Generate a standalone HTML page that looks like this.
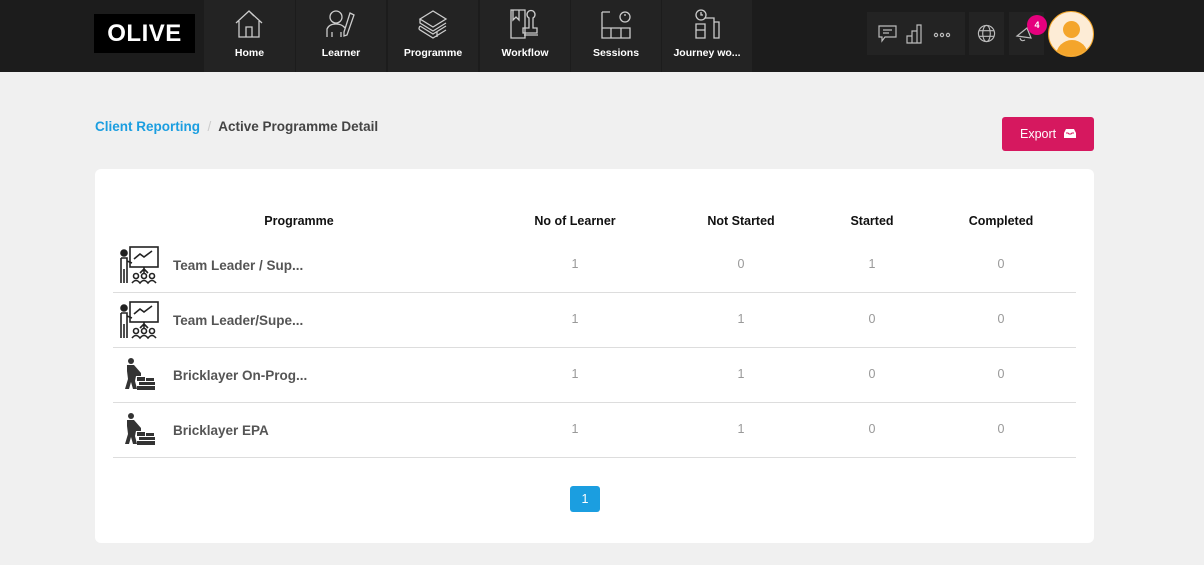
<!DOCTYPE html>
<html><head><meta charset="utf-8"><style>
*{margin:0;padding:0;box-sizing:border-box}
body{width:1204px;height:565px;background:#f0f0f0;font-family:"Liberation Sans",sans-serif;position:relative;overflow:hidden}
.top{position:absolute;left:0;top:0;width:1204px;height:72px;background:#1c1c1c}
.logo{position:absolute;left:94px;top:14px;width:101px;height:39px;background:#000;color:#fff;font-weight:bold;font-size:24px;text-align:center;line-height:39px;letter-spacing:0.5px}
.nav{position:absolute;top:0;height:72px;width:90px;background:#232323}
.nav span{position:absolute;left:0;right:0;top:47px;text-align:center;color:#fff;font-size:10.5px;font-weight:bold}
.nav svg{position:absolute;left:29px;top:8px}
.box{position:absolute;top:12px;height:43px;background:#232323}
.a{position:absolute;color:#333}
.card{position:absolute;left:95px;top:169px;width:999px;height:374px;background:#fff;border-radius:6px}
.th{position:absolute;top:214px;font-size:12.5px;font-weight:bold;color:#111;transform:translateX(-50%);white-space:nowrap}
.v{position:absolute;font-size:12.5px;color:#999;transform:translateX(-50%)}
.name{position:absolute;left:173px;font-size:13.5px;color:#555;font-weight:bold}
.ln{position:absolute;left:113px;width:963px;height:1px;background:#ddd}
</style></head><body>
<div class="top">
<div class="logo">OLIVE</div>
<div class="nav" style="left:204px;width:91px"><svg width="32" height="32" viewBox="0 0 32 32" fill="none" stroke="#ccc" stroke-width="1.3"><path d="M3 15 L16 3 L29 15 M6 13 V29 H26 V13 M13 29 V19 H19 V29 M16 3 L21 8"/></svg><span>Home</span></div>
<div class="nav" style="left:296px"><svg width="32" height="32" viewBox="0 0 32 32" fill="none" stroke="#ccc" stroke-width="1.3"><circle cx="11" cy="9" r="6"/><path d="M2 29 V21 Q4 16 11 16 Q17 16 20 20 M7 24 V29 M16 24 V29 M25 5 L29 7 L22 27 L19 28 L19 24 Z"/></svg><span>Learner</span></div>
<div class="nav" style="left:388px"><svg width="32" height="32" viewBox="0 0 32 32" fill="none" stroke="#ccc" stroke-width="1.3"><path d="M3 11 L16 3 L29 11 L16 19 Z M3 11 V15 L16 23 L29 15 M3 18 L16 26 L29 18 M3 18 Q1 21 3 22 L16 30 L29 22 M20 24 V29"/></svg><span>Programme</span></div>
<div class="nav" style="left:480px"><svg width="32" height="32" viewBox="0 0 32 32" fill="none" stroke="#ccc" stroke-width="1.3"><path d="M2 2 H16 V30 H2 Z M4 2 V12 L7 9 L10 12 V2 M20 10 A4 4 0 1 1 24 10 V20 H28 V25 H14 V20 H20 Z M15 27 H29"/></svg><span>Workflow</span></div>
<div class="nav" style="left:571px"><svg width="32" height="32" viewBox="0 0 32 32" fill="none" stroke="#ccc" stroke-width="1.3"><path d="M2 4 H10 M2 4 V30 H30 V20 H2 M11 20 V30 M21 20 V30"/><circle cx="25" cy="9" r="5"/><path d="M24 7 L26 7"/></svg><span>Sessions</span></div>
<div class="nav" style="left:662px"><svg width="32" height="32" viewBox="0 0 32 32" fill="none" stroke="#ccc" stroke-width="1.3"><circle cx="10" cy="7" r="5"/><path d="M10 4 V7 H12 M5 16 H14 V30 H5 Z M5 22 H14 M14 10 H23 V30 M23 14 V30 H28 V14 Z"/></svg><span>Journey wo...</span></div>
<div class="box" style="left:867px;width:98px"><svg style="position:absolute;left:11px;top:12px" width="80" height="20" viewBox="0 0 80 20" fill="none" stroke="#bbb" stroke-width="1.2"><path d="M1 2 H18 V13 H7 L4 17 V13 H1 Z M5 6 H14 M5 9 H11 M29 12 H34 V19 H29 Z M34 19 V7 H39 V19 H34 M39 19 V1 H43 V19 H39"/><circle cx="58" cy="11" r="1.6"/><circle cx="64" cy="11" r="1.6"/><circle cx="70" cy="11" r="1.6"/></svg></div>
<div class="box" style="left:969px;width:35px"><svg style="position:absolute;left:8px;top:12px" width="19" height="19" viewBox="0 0 20 20" fill="none" stroke="#bbb" stroke-width="1.2"><circle cx="10" cy="10" r="8.5"/><ellipse cx="10" cy="10" rx="4" ry="8.5"/><path d="M2 7 H18 M2 13 H18"/></svg></div>
<div class="box" style="left:1009px;width:35px"><svg style="position:absolute;left:6px;top:14px" width="20" height="18" viewBox="0 0 20 18" fill="none" stroke="#bbb" stroke-width="1.2"><path d="M2 10 L12 2 L16 12 Z M5 12 Q6 16 10 14"/></svg></div>
<div style="position:absolute;left:1027px;top:15px;width:20px;height:20px;border-radius:50%;background:#e5007d;color:#fff;font-size:9px;font-weight:bold;text-align:center;line-height:20px">4</div>
<div style="position:absolute;left:1048px;top:11px;width:46px;height:46px;border-radius:50%;background:#fdecd6;border:1px solid #f0a42a;overflow:hidden"><div style="position:absolute;left:14px;top:9px;width:17px;height:17px;border-radius:50%;background:#f4a52b"></div><div style="position:absolute;left:7px;top:28px;width:32px;height:26px;border-radius:16px 16px 0 0;background:#f4a52b"></div></div>
</div>
<div class="a" style="left:95px;top:119px;font-size:13.5px;font-weight:bold"><span style="color:#1b9ee0">Client Reporting</span> <span style="color:#ccc;font-weight:normal">&nbsp;/&nbsp;</span> <span style="color:#444">Active Programme Detail</span></div>
<div style="position:absolute;left:1002px;top:117px;width:92px;height:34px;background:#d6185f;border-radius:3px;color:#fff;font-size:12.5px;line-height:34px;padding-left:18px">Export<svg style="position:absolute;left:62px;top:12px" width="12" height="9" viewBox="0 0 12 9"><path d="M2 0 H10 L12 4 V9 H0 V4 Z" fill="#fff"/><path d="M2 4 H4 L5 5 H7 L8 4 H10" stroke="#d6185f" fill="none"/></svg></div>
<div class="card"></div>
<div class="th" style="left:299px">Programme</div>
<div class="th" style="left:575px">No of Learner</div>
<div class="th" style="left:741px">Not Started</div>
<div class="th" style="left:872px">Started</div>
<div class="th" style="left:1001px">Completed</div>
<svg style="position:absolute;left:118px;top:245px" width="42" height="40" viewBox="0 0 42 40" fill="none" stroke="#222" stroke-width="1.6"><rect x="12" y="2" width="28" height="20"/><path d="M16 14 L22 9 L26 12 L34 6 M26 22 V28 M22 28 L26 24 L30 28"/><circle cx="6" cy="8" r="3" fill="#222"/><path d="M3 13 H9 V38 M3 13 V38 M6 24 V38 M9 16 L14 18" /><circle cx="18" cy="31" r="2.5"/><circle cx="26" cy="31" r="2.5"/><circle cx="34" cy="31" r="2.5"/><path d="M14 38 Q18 33 22 38 Q26 33 30 38 Q34 33 38 38"/></svg>
<svg style="position:absolute;left:118px;top:300px" width="42" height="40" viewBox="0 0 42 40" fill="none" stroke="#222" stroke-width="1.6"><rect x="12" y="2" width="28" height="20"/><path d="M16 14 L22 9 L26 12 L34 6 M26 22 V28 M22 28 L26 24 L30 28"/><circle cx="6" cy="8" r="3" fill="#222"/><path d="M3 13 H9 V38 M3 13 V38 M6 24 V38 M9 16 L14 18" /><circle cx="18" cy="31" r="2.5"/><circle cx="26" cy="31" r="2.5"/><circle cx="34" cy="31" r="2.5"/><path d="M14 38 Q18 33 22 38 Q26 33 30 38 Q34 33 38 38"/></svg>
<svg style="position:absolute;left:123px;top:357px" width="34" height="34" viewBox="0 0 34 34" fill="#333"><circle cx="8" cy="4" r="3"/><path d="M4 8 H11 L18 16 V19 H13 L12 24 L14 32 H10 L8 25 L6 32 H2 L5 22 L4 14 Z"/><rect x="14" y="20" width="8" height="4"/><rect x="16" y="25" width="16" height="3"/><rect x="14" y="29" width="18" height="4"/><rect x="23" y="21" width="8" height="3"/></svg>
<svg style="position:absolute;left:123px;top:412px" width="34" height="34" viewBox="0 0 34 34" fill="#333"><circle cx="8" cy="4" r="3"/><path d="M4 8 H11 L18 16 V19 H13 L12 24 L14 32 H10 L8 25 L6 32 H2 L5 22 L4 14 Z"/><rect x="14" y="20" width="8" height="4"/><rect x="16" y="25" width="16" height="3"/><rect x="14" y="29" width="18" height="4"/><rect x="23" y="21" width="8" height="3"/></svg>
<div class="name" style="top:258px">Team Leader / Sup...</div>
<div class="name" style="top:313px">Team Leader/Supe...</div>
<div class="name" style="top:368px">Bricklayer On-Prog...</div>
<div class="name" style="top:423px">Bricklayer EPA</div>
<div class="ln" style="top:292px"></div><div class="ln" style="top:347px"></div><div class="ln" style="top:402px"></div><div class="ln" style="top:457px"></div>
<div class="v" style="left:575px;top:257px">1</div><div class="v" style="left:741px;top:257px">0</div><div class="v" style="left:872px;top:257px">1</div><div class="v" style="left:1001px;top:257px">0</div>
<div class="v" style="left:575px;top:312px">1</div><div class="v" style="left:741px;top:312px">1</div><div class="v" style="left:872px;top:312px">0</div><div class="v" style="left:1001px;top:312px">0</div>
<div class="v" style="left:575px;top:367px">1</div><div class="v" style="left:741px;top:367px">1</div><div class="v" style="left:872px;top:367px">0</div><div class="v" style="left:1001px;top:367px">0</div>
<div class="v" style="left:575px;top:422px">1</div><div class="v" style="left:741px;top:422px">1</div><div class="v" style="left:872px;top:422px">0</div><div class="v" style="left:1001px;top:422px">0</div>
<div style="position:absolute;left:570px;top:486px;width:30px;height:26px;background:#1b9ee0;border-radius:3px;color:#fff;font-size:12.5px;text-align:center;line-height:26px">1</div>
</body></html>
